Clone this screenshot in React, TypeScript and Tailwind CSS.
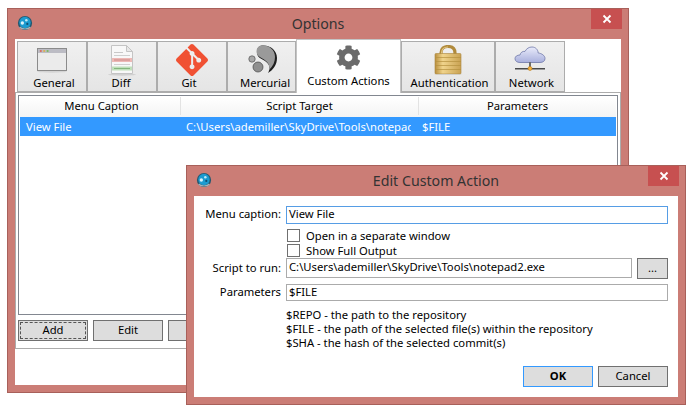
import React from 'react';
import { SiGit } from 'react-icons/si';
import { FaCog } from 'react-icons/fa';

const AppIcon = () => (
  <svg width="16" height="16" viewBox="0 0 18 18" className="shrink-0">
    <circle cx="9" cy="9" r="8" fill="#24586f" />
    <circle cx="9" cy="8.5" r="6.4" fill="#1c9bd0" />
    <circle cx="6" cy="9" r="1.9" fill="#d8f2fa" />
    <circle cx="10.5" cy="5.8" r="1.4" fill="#bfe9f5" />
    <circle cx="11.6" cy="10" r="1.2" fill="#0d4f73" />
    <path d="M3 13.5c2.5 3 9.5 3 12 0" stroke="#9fb3bc" strokeWidth="1.4" fill="none" />
  </svg>
);

const WindowIcon = () => (
  <svg width="32" height="26" viewBox="0 0 32 26">
    <ellipse cx="16" cy="24.5" rx="15" ry="1.2" fill="#d4d4d4" />
    <rect x="1.5" y="1.5" width="29" height="22" fill="#f4f4f4" stroke="#8b8b8b" />
    <rect x="2" y="2" width="28" height="4" fill="#bcbcc4" />
    <rect x="2" y="6" width="28" height="17" fill="#ebebeb" />
    <circle cx="4.8" cy="4" r="1.1" fill="#d9695f" />
    <circle cx="8.2" cy="4" r="1.1" fill="#dcb04f" />
    <circle cx="11.6" cy="4" r="1.1" fill="#79b95f" />
  </svg>
);

const DiffIcon = () => (
  <svg width="30" height="32" viewBox="0 0 30 32">
    <ellipse cx="15" cy="30.5" rx="14" ry="1.2" fill="#d0d0d0" />
    <path d="M4.5 1.5h15l6 6v22h-21z" fill="#f8f8f8" stroke="#c4c4c4" />
    <path d="M19.5 1.5v6h6z" fill="#e8e8e8" stroke="#c4c4c4" />
    <rect x="7" y="8" width="9" height="1" fill="#c8c8c8" />
    <rect x="7" y="11" width="16" height="1" fill="#d0d0d0" />
    <rect x="5" y="14" width="20" height="4" fill="#eeb9b6" />
    <rect x="7" y="15.5" width="16" height="1" fill="#c98985" />
    <rect x="7" y="20" width="16" height="1" fill="#d0d0d0" />
    <rect x="5" y="22.5" width="20" height="4" fill="#bfe0ba" />
    <rect x="7" y="24" width="16" height="1" fill="#85b67e" />
  </svg>
);

const MercurialIcon = () => (
  <svg width="32" height="30" viewBox="0 0 32 30">
    <path d="M14 1c9-2 17 4 17 12 0 7-4 12-9 15 3-6 1-9-3-12-3-2-8-3-8-9 0-3 1-5 3-6z" fill="#1f1f1f" />
    <path d="M13.5 1c8-2 15.5 3 15.5 11 0 5-2 9-6 13 1-5-1-8-5-10.5-3-2-7.5-3.5-7.5-8 0-2.5 1-4.5 3-5.5z" fill="#9a9a9a" />
    <circle cx="6" cy="14" r="3.2" fill="#a8a8a8" stroke="#555" strokeWidth="0.7" />
    <circle cx="12" cy="22" r="5" fill="#8f8f8f" stroke="#444" strokeWidth="0.7" />
  </svg>
);

const LockIcon = () => (
  <svg width="28" height="30" viewBox="0 0 28 30">
    <defs>
      <linearGradient id="lockBody" x1="0" x2="1" y1="0" y2="0">
        <stop offset="0" stopColor="#b98f3e" />
        <stop offset="0.3" stopColor="#f0d48c" />
        <stop offset="1" stopColor="#c9a253" />
      </linearGradient>
    </defs>
    <path d="M7 11V8C7 3.5 10 1.5 14 1.5S21 3.5 21 8V11" fill="none" stroke="#b08a3c" strokeWidth="3.2" />
    <path d="M7.6 10V8C7.6 4 10.5 2 14 2" fill="none" stroke="#e6cb88" strokeWidth="1.2" />
    <rect x="1" y="8.5" width="26" height="20.5" rx="1" fill="url(#lockBody)" stroke="#a9843c" strokeWidth="0.6" />
    <path d="M1 12.5h26M1 16.5h26M1 20.5h26M1 24.5h26" stroke="#b4913f" strokeWidth="0.7" />
    <ellipse cx="14" cy="29.5" rx="14" ry="0.5" fill="#cfcfcf" />
  </svg>
);

const NetworkIcon = () => (
  <svg width="32" height="27" viewBox="0 0 32 27">
    <defs>
      <linearGradient id="cloudFill" x1="0" x2="0" y1="0" y2="1">
        <stop offset="0" stopColor="#e9ebfa" />
        <stop offset="1" stopColor="#a9b0dd" />
      </linearGradient>
    </defs>
    <path d="M6 16.5c-3 0-5-1.5-5-3.8S3 9 6 9c.5-2.5 2.5-4 5-3.6C12.5 2.5 15 1 18 1c3.5 0 6 2.5 6.2 6C27.5 7.3 31 9.5 31 12.5c0 2.5-2 4-5 4z" fill="url(#cloudFill)" stroke="#6f77a8" strokeWidth="0.8" />
    <rect x="15" y="16" width="2" height="6" fill="#6d6d6d" />
    <rect x="1" y="22" width="30" height="1.5" fill="#4a4a4a" />
    <circle cx="16" cy="22.5" r="2" fill="#f6b23c" stroke="#b87a1c" strokeWidth="0.6" />
  </svg>
);

const Tab = ({ label, icon, active, width, labelClass = '' }: { label: string; icon: React.ReactNode; active?: boolean; width: string; labelClass?: string }) => (
  <div
    className={
      active
        ? `${width} relative z-10 -mb-px flex h-[54px] flex-col items-center border border-b-0 border-[#c4c4c4] bg-white`
        : `${width} flex h-[51px] flex-col items-center border border-[#acacac] bg-gradient-to-b from-[#f0f0f0] to-[#e5e5e5]`
    }
  >
    <div className="flex h-[35px] items-center justify-center">{icon}</div>
    <span className={`-mt-px whitespace-nowrap text-black ${labelClass}`}>{label}</span>
  </div>
);

const Btn = ({ label, className = '', inner }: { label?: string; className?: string; inner?: boolean }) => (
  <div className={`flex h-[21px] w-[70px] items-center justify-center border border-[#707070] bg-[#dddddd] pb-[1px] text-black ${className}`}>
    {inner ? (
      <span className="mt-px flex h-[17px] w-[66px] items-center justify-center border border-dashed border-[#555] pb-[1px]">{label}</span>
    ) : (
      label
    )}
  </div>
);

const CloseBtn = () => (
  <div className="flex h-[20px] w-[31px] items-center justify-center bg-[#c75050]">
    <svg width="10" height="10" viewBox="0 0 10 10">
      <path d="M1.5 1.5l7 7M8.5 1.5l-7 7" stroke="#fff" strokeWidth="1.8" />
    </svg>
  </div>
);

const Check = ({ label, rowClass }: { label: string; rowClass: string }) => (
  <div className={`flex items-start ${rowClass}`}>
    <div className="mr-[6px] h-[13px] w-[13px] border border-[#707070] bg-white" />
    <span className="text-black">{label}</span>
  </div>
);

const Field = ({ value, className = '' }: { value: string; className?: string }) => (
  <div className={`flex items-center border border-[#ababab] bg-white pb-[2px] pl-[2px] text-black ${className}`}>{value}</div>
);

export default function App() {
  return (
    <div className="relative h-[414px] w-[694px] overflow-hidden bg-white text-[11.25px] leading-[14px] text-black [font-family:'Noto_Sans',sans-serif]">
      {/* Options window */}
      <div className="absolute left-[7px] top-[8px] flex h-[385px] w-[622px] flex-col border border-[#a8605a] bg-[#cb7d76]">
        <div className="relative flex h-[30px] shrink-0 items-center justify-center text-[14.2px] text-[#333]">
          <div className="absolute left-[9px] top-[6px]">
            <AppIcon />
          </div>
          <span>Options</span>
          <div className="absolute right-[6px] top-0">
            <CloseBtn />
          </div>
        </div>
        <div className="mx-[7px] mb-[7px] flex flex-1 flex-col bg-white">
          <div className="flex h-[53px] items-end pl-[2px]">
            <Tab label="General" width="w-[70px]" labelClass="ml-[4px]" icon={<WindowIcon />} />
            <Tab label="Diff" width="w-[70px]" labelClass="mr-[2px]" icon={<DiffIcon />} />
            <Tab label="Git" width="w-[70px]" labelClass="mr-[6px]" icon={<SiGit size={32} color="#f05133" />} />
            <Tab label="Mercurial" width="w-[69px]" labelClass="ml-[7px]" icon={<MercurialIcon />} />
            <Tab label="Custom Actions" active width="w-[105px]" icon={<FaCog size={25} color="#6b6b6b" />} />
            <Tab label="Authentication" width="w-[94px]" labelClass="ml-[3px]" icon={<LockIcon />} />
            <Tab label="Network" width="w-[70px]" labelClass="ml-[3px]" icon={<NetworkIcon />} />
          </div>
          <div className="flex h-[257px] flex-col border border-[#acacac] p-[2px]">
            <div className="flex h-[220px] flex-col border border-[#828790] p-px">
              <div className="flex h-[20px] bg-gradient-to-b from-white to-[#f4f4f4] pb-[2px]">
                <div className="flex w-[161px] items-center justify-center border-r border-[#e3e3e3] pl-[3px]">Menu Caption</div>
                <div className="flex w-[238px] items-center justify-center border-r border-[#e3e3e3]">Script Target</div>
                <div className="flex flex-1 items-center justify-center">Parameters</div>
              </div>
              <div className="flex h-[19px] items-center bg-[#3399ff] text-white">
                <div className="w-[161px] pl-[6px]">View File</div>
                <div className="w-[238px] pl-[5px]">
                  <div className="w-[225px] overflow-hidden whitespace-nowrap">C:\Users\ademiller\SkyDrive\Tools\notepad2.exe</div>
                </div>
                <div className="pl-[3px]">$FILE</div>
              </div>
            </div>
            <div className="mt-[5px] flex gap-[5px]">
              <Btn label="Add" inner />
              <Btn label="Edit" />
              <Btn />
            </div>
          </div>
        </div>
      </div>

      {/* Edit Custom Action dialog */}
      <div className="absolute left-[186px] top-[165px] flex h-[240px] w-[500px] flex-col border border-[#a8605a] bg-[#cb7d76]">
        <div className="relative flex h-[30px] shrink-0 items-center justify-center text-[14.2px] text-[#333]">
          <div className="absolute left-[9px] top-[6px]">
            <AppIcon />
          </div>
          <span>Edit Custom Action</span>
          <div className="absolute right-[6px] top-0">
            <CloseBtn />
          </div>
        </div>
        <div className="mx-[7px] mb-[7px] flex flex-1 flex-col bg-white pr-[10px] pt-[10px]">
          <div className="flex items-center">
            <div className="w-[87px] pb-[2px] text-right">Menu caption:</div>
            <Field value="View File" className="ml-[5px] h-[18px] flex-1 !border-[#569de5]" />
          </div>
          <div className="ml-[93px] mt-[5px] flex flex-col">
            <Check label="Open in a separate window" rowClass="h-[15px]" />
            <Check label="Show Full Output" rowClass="h-[14px]" />
          </div>
          <div className="flex items-start">
            <div className="w-[87px] pt-[3px] text-right">Script to run:</div>
            <Field value="C:\Users\ademiller\SkyDrive\Tools\notepad2.exe" className="ml-[5px] h-[20px] flex-1" />
            <div className="ml-[5px] flex h-[21px] w-[31px] items-center justify-center border border-[#707070] bg-[#dddddd] pb-[1px]">...</div>
          </div>
          <div className="mt-[5px] flex items-center">
            <div className="w-[87px] pb-[2px] text-right">Parameters</div>
            <Field value="$FILE" className="ml-[5px] h-[17px] flex-1" />
          </div>
          <div className="ml-[92px] mt-[7px] flex flex-col">
            <div>$REPO - the path to the repository</div>
            <div>$FILE - the path of the selected file(s) within the repository</div>
            <div>$SHA - the hash of the selected commit(s)</div>
          </div>
          <div className="mt-[16px] flex justify-end gap-[5px]">
            <Btn label="OK" className="!border-[#3399ff] font-bold" />
            <Btn label="Cancel" />
          </div>
        </div>
      </div>
    </div>
  );
}
